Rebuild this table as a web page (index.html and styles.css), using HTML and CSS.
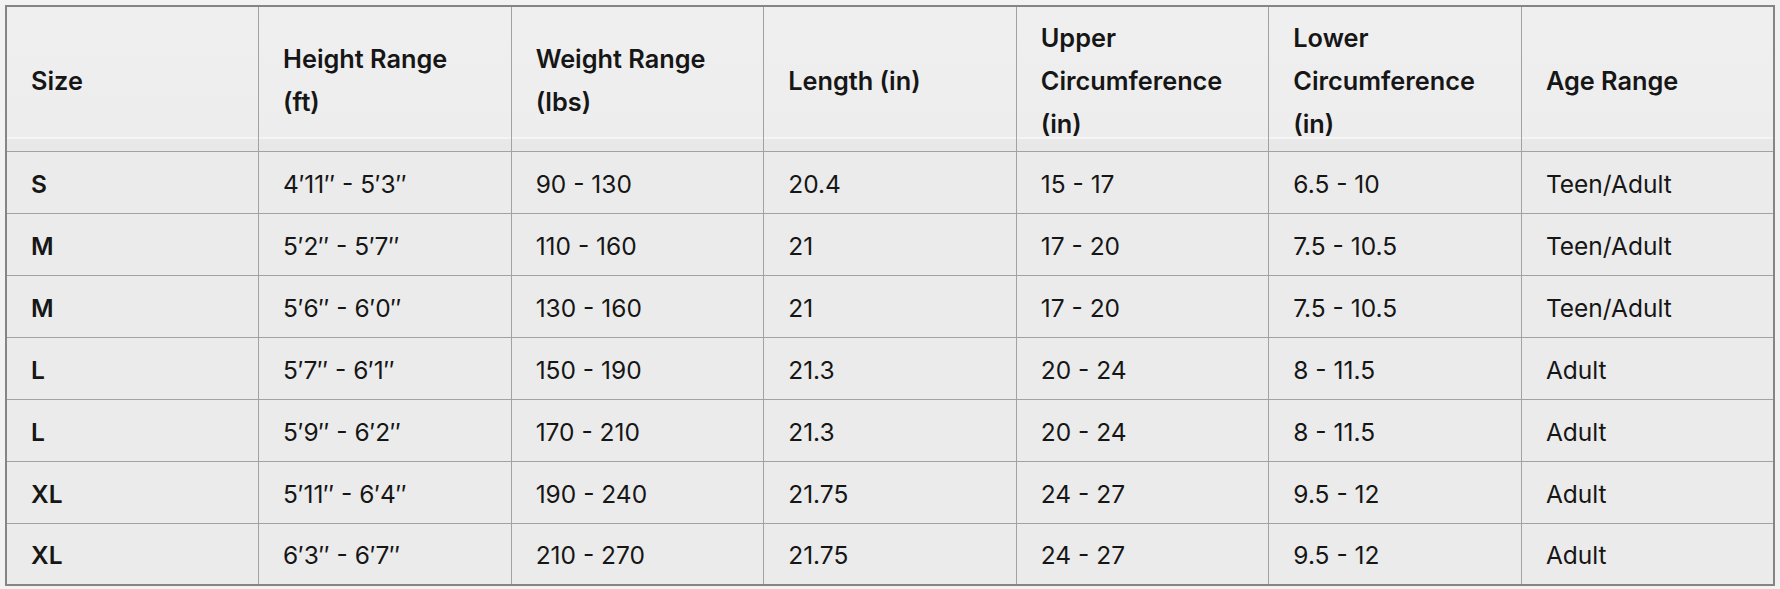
FILE: index.html
```html
<!DOCTYPE html>
<html lang="en">
<head>
<meta charset="utf-8">
<title>Size Chart</title>
<link rel="stylesheet" href="styles.css">
</head>
<body>
<table class="size-table">
  <thead>
    <tr>
      <th>Size</th>
      <th>Height Range<br>(ft)</th>
      <th>Weight Range<br>(lbs)</th>
      <th>Length (in)</th>
      <th>Upper<br>Circumference<br>(in)</th>
      <th>Lower<br>Circumference<br>(in)</th>
      <th>Age Range</th>
    </tr>
  </thead>
  <tbody>
    <tr><td class="size">S</td><td>4′11″ - 5′3″</td><td>90 - 130</td><td>20.4</td><td>15 - 17</td><td>6.5 - 10</td><td>Teen/Adult</td></tr>
    <tr><td class="size">M</td><td>5′2″ - 5′7″</td><td>110 - 160</td><td>21</td><td>17 - 20</td><td>7.5 - 10.5</td><td>Teen/Adult</td></tr>
    <tr><td class="size">M</td><td>5′6″ - 6′0″</td><td>130 - 160</td><td>21</td><td>17 - 20</td><td>7.5 - 10.5</td><td>Teen/Adult</td></tr>
    <tr><td class="size">L</td><td>5′7″ - 6′1″</td><td>150 - 190</td><td>21.3</td><td>20 - 24</td><td>8 - 11.5</td><td>Adult</td></tr>
    <tr><td class="size">L</td><td>5′9″ - 6′2″</td><td>170 - 210</td><td>21.3</td><td>20 - 24</td><td>8 - 11.5</td><td>Adult</td></tr>
    <tr><td class="size">XL</td><td>5′11″ - 6′4″</td><td>190 - 240</td><td>21.75</td><td>24 - 27</td><td>9.5 - 12</td><td>Adult</td></tr>
    <tr><td class="size">XL</td><td>6′3″ - 6′7″</td><td>210 - 270</td><td>21.75</td><td>24 - 27</td><td>9.5 - 12</td><td>Adult</td></tr>
  </tbody>
</table>
</body>
</html>
```

FILE: styles.css
```css
html, body {
  margin: 0;
  padding: 0;
  background: #f2f2f2;
}

body {
  padding: 5px;
  font-family: Inter, "Noto Sans", "Liberation Sans", sans-serif;
  color: #161616;
}

.size-table {
  width: 1770px;
  border-collapse: collapse;
  table-layout: fixed;
  background: #ebebeb;
  border: 2px solid #858585;
}

.size-table th,
.size-table td {
  border: 1.5px solid #a2a2a2;
  text-align: left;
  vertical-align: middle;
  padding: 3px 18px 0 24px;
}

.size-table th {
  height: 145px;
  box-sizing: border-box;
  font-size: 25.3px;
  font-weight: 600;
  line-height: 43px;
  background: linear-gradient(to bottom, #efefef 0, #ededed calc(100% - 14px), #f5f5f5 calc(100% - 14px), #f5f5f5 calc(100% - 12px), #e8e8e8 calc(100% - 12px), #e8e8e8 100%);
}

.size-table td {
  height: 62px;
  box-sizing: border-box;
  font-size: 24.5px;
  font-weight: 400;
  line-height: 30px;
}

.size-table td.size {
  font-weight: 600;
}
```
